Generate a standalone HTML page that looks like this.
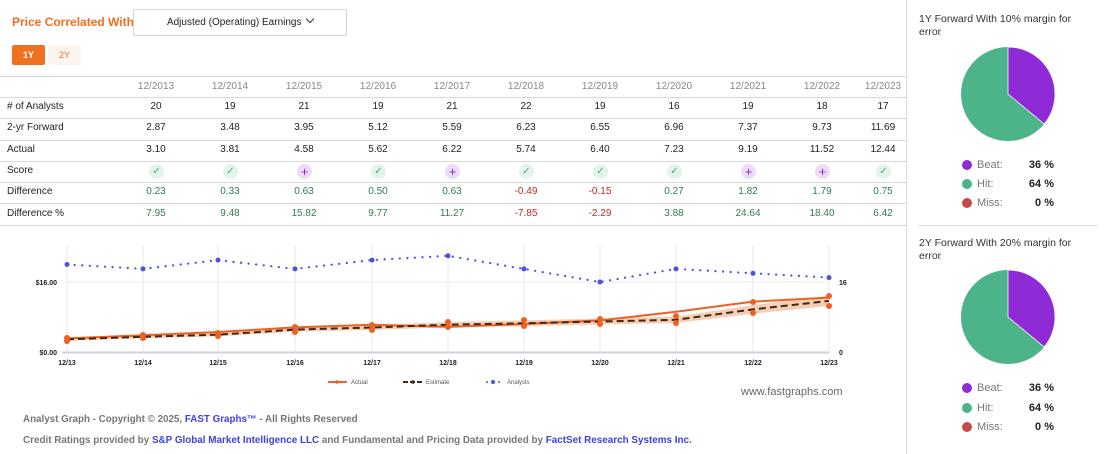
<!DOCTYPE html>
<html><head><meta charset="utf-8"><style>
body{margin:0;width:1109px;height:454px;background:#fff;font-family:"Liberation Sans",Arial,sans-serif;position:relative;overflow:hidden}
.a{position:absolute;white-space:nowrap}
.hl{position:absolute;left:0;width:906px;height:1px;background:#d8d8d8}
.c{position:absolute;text-align:center;width:60px;font-size:10px;color:#222}
.lbl{position:absolute;left:7px;font-size:10px;color:#222}
.hd{color:#888}
.g{color:#2e7d55}.r{color:#c62828}
.ic{position:absolute;width:15px;height:15px;border-radius:50%;font-size:10px;text-align:center;line-height:15px}
.ck{background:#e3f4ea;color:#4caf7a}.pl{background:#ecdcf7;color:#8e2bd6;font-size:13px}
.leg{position:absolute;font-size:11px;color:#777}
.lv{position:absolute;font-size:11px;color:#222;font-weight:bold;text-align:right;width:40px}
.dot{position:absolute;width:10px;height:10px;border-radius:50%}
</style></head><body>
<div class="a" style="left:12px;top:15px;font-size:12px;font-weight:bold;color:#f07020">Price Correlated With</div>
<div class="a" style="left:133px;top:9px;width:212px;height:25px;border:1px solid #d4d4dc;border-radius:2px;font-size:10px;color:#222;text-align:center;line-height:25px">Adjusted (Operating) Earnings &nbsp;<span style="display:inline-block;width:5px;height:5px;border-right:1.5px solid #333;border-bottom:1.5px solid #333;transform:rotate(45deg);position:relative;top:-3px"></span></div>
<div class="a" style="left:12px;top:45px;width:33px;height:20px;background:#f07020;border-radius:2px;color:#fff;font-size:9px;text-align:center;line-height:20px;font-weight:bold">1Y</div>
<div class="a" style="left:48px;top:45px;width:33px;height:20px;background:#fdf5f0;border-radius:2px;color:#f07020;font-size:9px;text-align:center;line-height:20px">2Y</div>

<div class="hl" style="top:76px"></div><div class="hl" style="top:97px"></div><div class="hl" style="top:118px"></div><div class="hl" style="top:140px"></div><div class="hl" style="top:161px"></div><div class="hl" style="top:182px"></div><div class="hl" style="top:203px"></div><div class="hl" style="top:225px"></div>
<div class="a" style="left:906px;top:0;width:1px;height:454px;background:#ddd"></div>

<div class="lbl" style="top:101px"># of Analysts</div>
<div class="lbl" style="top:122px">2-yr Forward</div>
<div class="lbl" style="top:144px">Actual</div>
<div class="lbl" style="top:165px">Score</div>
<div class="lbl" style="top:186px">Difference</div>
<div class="lbl" style="top:208px">Difference %</div>

<svg class="a" style="left:0;top:240px" width="906" height="160" viewBox="0 240 906 160">
<g stroke="#e8e8e8" stroke-width="1">
<line x1="67" y1="245" x2="67" y2="352"/><line x1="143" y1="245" x2="143" y2="352"/><line x1="218" y1="245" x2="218" y2="352"/><line x1="295" y1="245" x2="295" y2="352"/><line x1="372" y1="245" x2="372" y2="352"/><line x1="448" y1="245" x2="448" y2="352"/><line x1="524" y1="245" x2="524" y2="352"/><line x1="600" y1="245" x2="600" y2="352"/><line x1="676" y1="245" x2="676" y2="352"/><line x1="753" y1="245" x2="753" y2="352"/><line x1="829" y1="245" x2="829" y2="352"/>
<line x1="67" y1="282" x2="829" y2="282"/>
</g>
<line x1="62" y1="352.5" x2="829" y2="352.5" stroke="#cfd1dc" stroke-width="2"/>
<polygon fill="#f7c4a8" opacity="0.85" points="67,338.1 143,335.3 218,333 295,327.4 372,325.1 448,322 524,320.4 600,318.5 676,316.6 753,305.1 829,295.8 829,306 753,313.7 676,323 600,324.5 524,326.2 448,327.4 372,329.9 295,331.8 218,336.4 143,338.3 67,340.7"/>
<polyline fill="none" stroke="#f06020" stroke-width="2" points="67,338.4 143,335.3 218,332 295,327.4 372,324.8 448,326.9 524,324 600,320.4 676,311.8 753,301.6 829,297.6"/>
<polyline fill="none" stroke="#3a2a1a" stroke-width="2" stroke-dasharray="7,4" points="67,339.4 143,336.8 218,334.7 295,329.6 372,327.5 448,324.7 524,323.3 600,321.5 676,319.8 753,309.4 829,300.9"/>
<g fill="#f06020">
<circle cx="67" cy="338" r="3"/><circle cx="67" cy="341" r="3"/><circle cx="143" cy="335" r="3"/><circle cx="143" cy="338" r="3"/><circle cx="218" cy="333" r="3"/><circle cx="218" cy="336" r="3"/><circle cx="295" cy="327" r="3"/><circle cx="295" cy="332" r="3"/><circle cx="372" cy="325" r="3"/><circle cx="372" cy="330" r="3"/><circle cx="448" cy="322" r="3"/><circle cx="448" cy="327" r="3"/><circle cx="524" cy="320" r="3"/><circle cx="524" cy="326" r="3"/><circle cx="600" cy="319" r="3"/><circle cx="600" cy="324" r="3"/><circle cx="676" cy="316" r="3"/><circle cx="676" cy="323" r="3"/><circle cx="753" cy="302" r="3"/><circle cx="753" cy="313" r="3"/><circle cx="829" cy="296" r="3"/><circle cx="829" cy="306" r="3"/>
</g>
<polyline fill="none" stroke="#5050e0" stroke-width="2.2" stroke-dasharray="0.1,7.5" stroke-linecap="round" points="67,264.5 143,268.9 218,260.1 295,268.9 372,260.1 448,255.8 524,268.9 600,282 676,268.9 753,273.3 829,277.6"/>
<g fill="#5050e0"><circle cx="67" cy="264.5" r="2.5"/><circle cx="143" cy="268.9" r="2.5"/><circle cx="218" cy="260.1" r="2.5"/><circle cx="295" cy="268.9" r="2.5"/><circle cx="372" cy="260.1" r="2.5"/><circle cx="448" cy="255.8" r="2.5"/><circle cx="524" cy="268.9" r="2.5"/><circle cx="600" cy="282" r="2.5"/><circle cx="676" cy="268.9" r="2.5"/><circle cx="753" cy="273.3" r="2.5"/><circle cx="829" cy="277.6" r="2.5"/></g>
<g font-size="7" fill="#222" font-weight="bold" font-family="Liberation Sans,sans-serif">
<text x="57" y="285" text-anchor="end">$16.00</text><text x="57" y="355" text-anchor="end">$0.00</text>
<text x="839" y="285">16</text><text x="839" y="355">0</text>
<g text-anchor="middle"><text x="67" y="365">12/13</text><text x="143" y="365">12/14</text><text x="218" y="365">12/15</text><text x="295" y="365">12/16</text><text x="372" y="365">12/17</text><text x="448" y="365">12/18</text><text x="524" y="365">12/19</text><text x="600" y="365">12/20</text><text x="676" y="365">12/21</text><text x="753" y="365">12/22</text><text x="829" y="365">12/23</text></g>
</g>
<g font-size="6" fill="#555" font-family="Liberation Sans,sans-serif">
<line x1="328" y1="382" x2="347" y2="382" stroke="#f06020" stroke-width="2"/><circle cx="337" cy="382" r="1.8" fill="#f06020"/><text x="351" y="384">Actual</text>
<line x1="403" y1="382" x2="422" y2="382" stroke="#3a2a1a" stroke-width="2" stroke-dasharray="5,2"/><circle cx="413" cy="382" r="1.8" fill="#3a2a1a"/><text x="426" y="384">Estimate</text>
<circle cx="487" cy="382" r="1" fill="#5050e0"/><circle cx="493" cy="382" r="2" fill="#5050e0"/><circle cx="499" cy="382" r="1" fill="#5050e0"/><text x="507" y="384">Analysts</text>
</g>
</svg>
<div class="a" style="left:741px;top:386px;font-size:11px;color:#666">www.fastgraphs.com</div>
<div class="a" style="left:23px;top:414px;font-size:9.8px;color:#777;font-weight:bold">Analyst Graph - Copyright © 2025, <span style="color:#4040e0">FAST Graphs™</span> - All Rights Reserved</div>
<div class="a" style="left:23px;top:435px;font-size:9.9px;color:#777;font-weight:bold">Credit Ratings provided by <span style="color:#4040e0">S&amp;P Global Market Intelligence LLC</span> and Fundamental and Pricing Data provided by <span style="color:#4040e0">FactSet Research Systems Inc.</span></div>

<div class="a" style="left:919px;top:13px;font-size:10.5px;color:#333;line-height:13px;white-space:normal;width:170px">1Y Forward With 10% margin for error</div>
<svg class="a" style="left:961px;top:47px" width="94" height="94"><circle cx="47" cy="47" r="47" fill="#4db388"/><path d="M47,47 L47,0 A47,47 0 0 1 83.2,77 Z" fill="#8e2bd6" stroke="#fff" stroke-width="0.8"/></svg>
<div class="dot" style="left:962px;top:160px;background:#8e2bd6"></div><div class="leg" style="left:977px;top:159px">Beat:</div><div class="lv" style="left:1014px;top:159px">36 %</div>
<div class="dot" style="left:962px;top:179px;background:#4db388"></div><div class="leg" style="left:977px;top:178px">Hit:</div><div class="lv" style="left:1014px;top:178px">64 %</div>
<div class="dot" style="left:962px;top:198px;background:#c84848"></div><div class="leg" style="left:977px;top:197px">Miss:</div><div class="lv" style="left:1014px;top:197px">0 %</div>
<div class="a" style="left:918px;top:225px;width:180px;height:1px;background:#ddd"></div>
<div class="a" style="left:919px;top:237px;font-size:10.5px;color:#333;line-height:13px;white-space:normal;width:170px">2Y Forward With 20% margin for error</div>
<svg class="a" style="left:961px;top:270px" width="94" height="94"><circle cx="47" cy="47" r="47" fill="#4db388"/><path d="M47,47 L47,0 A47,47 0 0 1 83.2,77 Z" fill="#8e2bd6" stroke="#fff" stroke-width="0.8"/></svg>
<div class="dot" style="left:962px;top:383px;background:#8e2bd6"></div><div class="leg" style="left:977px;top:382px">Beat:</div><div class="lv" style="left:1014px;top:382px">36 %</div>
<div class="dot" style="left:962px;top:403px;background:#4db388"></div><div class="leg" style="left:977px;top:402px">Hit:</div><div class="lv" style="left:1014px;top:402px">64 %</div>
<div class="dot" style="left:962px;top:422px;background:#c84848"></div><div class="leg" style="left:977px;top:421px">Miss:</div><div class="lv" style="left:1014px;top:421px">0 %</div>

<div class="c hd" style="left:126px;top:81px">12/2013</div><div class="c hd" style="left:200px;top:81px">12/2014</div><div class="c hd" style="left:274px;top:81px">12/2015</div><div class="c hd" style="left:348px;top:81px">12/2016</div><div class="c hd" style="left:422px;top:81px">12/2017</div><div class="c hd" style="left:496px;top:81px">12/2018</div><div class="c hd" style="left:570px;top:81px">12/2019</div><div class="c hd" style="left:644px;top:81px">12/2020</div><div class="c hd" style="left:718px;top:81px">12/2021</div><div class="c hd" style="left:792px;top:81px">12/2022</div><div class="c hd" style="left:853px;top:81px">12/2023</div>
<div class="c" style="left:126px;top:101px">20</div><div class="c" style="left:200px;top:101px">19</div><div class="c" style="left:274px;top:101px">21</div><div class="c" style="left:348px;top:101px">19</div><div class="c" style="left:422px;top:101px">21</div><div class="c" style="left:496px;top:101px">22</div><div class="c" style="left:570px;top:101px">19</div><div class="c" style="left:644px;top:101px">16</div><div class="c" style="left:718px;top:101px">19</div><div class="c" style="left:792px;top:101px">18</div><div class="c" style="left:853px;top:101px">17</div>
<div class="c" style="left:126px;top:122px">2.87</div><div class="c" style="left:200px;top:122px">3.48</div><div class="c" style="left:274px;top:122px">3.95</div><div class="c" style="left:348px;top:122px">5.12</div><div class="c" style="left:422px;top:122px">5.59</div><div class="c" style="left:496px;top:122px">6.23</div><div class="c" style="left:570px;top:122px">6.55</div><div class="c" style="left:644px;top:122px">6.96</div><div class="c" style="left:718px;top:122px">7.37</div><div class="c" style="left:792px;top:122px">9.73</div><div class="c" style="left:853px;top:122px">11.69</div>
<div class="c" style="left:126px;top:144px">3.10</div><div class="c" style="left:200px;top:144px">3.81</div><div class="c" style="left:274px;top:144px">4.58</div><div class="c" style="left:348px;top:144px">5.62</div><div class="c" style="left:422px;top:144px">6.22</div><div class="c" style="left:496px;top:144px">5.74</div><div class="c" style="left:570px;top:144px">6.40</div><div class="c" style="left:644px;top:144px">7.23</div><div class="c" style="left:718px;top:144px">9.19</div><div class="c" style="left:792px;top:144px">11.52</div><div class="c" style="left:853px;top:144px">12.44</div>
<div class="ic ck" style="left:149px;top:164px">✓</div><div class="ic ck" style="left:223px;top:164px">✓</div><div class="ic pl" style="left:297px;top:164px">+</div><div class="ic ck" style="left:371px;top:164px">✓</div><div class="ic pl" style="left:445px;top:164px">+</div><div class="ic ck" style="left:519px;top:164px">✓</div><div class="ic ck" style="left:593px;top:164px">✓</div><div class="ic ck" style="left:667px;top:164px">✓</div><div class="ic pl" style="left:741px;top:164px">+</div><div class="ic pl" style="left:815px;top:164px">+</div><div class="ic ck" style="left:876px;top:164px">✓</div>
<div class="c g" style="left:126px;top:186px">0.23</div><div class="c g" style="left:200px;top:186px">0.33</div><div class="c g" style="left:274px;top:186px">0.63</div><div class="c g" style="left:348px;top:186px">0.50</div><div class="c g" style="left:422px;top:186px">0.63</div><div class="c r" style="left:496px;top:186px">-0.49</div><div class="c r" style="left:570px;top:186px">-0.15</div><div class="c g" style="left:644px;top:186px">0.27</div><div class="c g" style="left:718px;top:186px">1.82</div><div class="c g" style="left:792px;top:186px">1.79</div><div class="c g" style="left:853px;top:186px">0.75</div>
<div class="c g" style="left:126px;top:208px">7.95</div><div class="c g" style="left:200px;top:208px">9.48</div><div class="c g" style="left:274px;top:208px">15.82</div><div class="c g" style="left:348px;top:208px">9.77</div><div class="c g" style="left:422px;top:208px">11.27</div><div class="c r" style="left:496px;top:208px">-7.85</div><div class="c r" style="left:570px;top:208px">-2.29</div><div class="c g" style="left:644px;top:208px">3.88</div><div class="c g" style="left:718px;top:208px">24.64</div><div class="c g" style="left:792px;top:208px">18.40</div><div class="c g" style="left:853px;top:208px">6.42</div>
</body></html>
